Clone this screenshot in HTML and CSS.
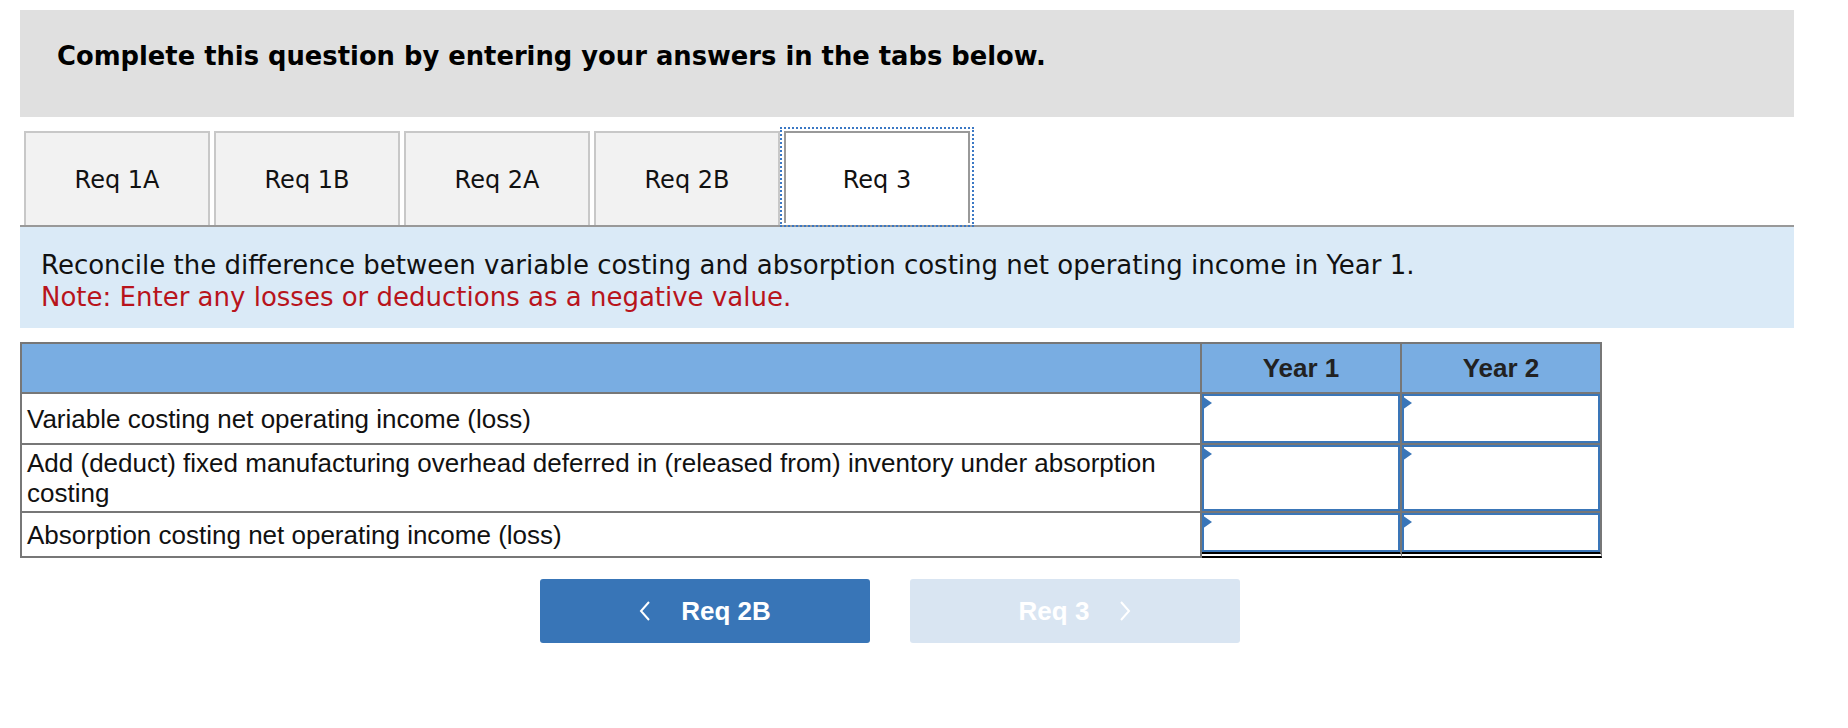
FILE: index.html
```html
<!DOCTYPE html>
<html>
<head>
<meta charset="utf-8">
<link rel="stylesheet" href="styles.css">
</head>
<body>
<div class="page">
  <div class="instructions">Complete this question by entering your answers in the tabs below.</div>
  <div class="tabs">
    <div class="tab">Req 1A</div>
    <div class="tab">Req 1B</div>
    <div class="tab">Req 2A</div>
    <div class="tab">Req 2B</div>
    <div class="tab active">Req 3</div>
  </div>
  <div class="band">
    <div class="prompt">Reconcile the difference between variable costing and absorption costing net operating income in Year 1.</div>
    <div class="note">Note: Enter any losses or deductions as a negative value.</div>
  </div>
  <table class="grid">
    <tr class="head">
      <th class="label-col"><div class="h48"></div></th>
      <th class="val-col">Year 1</th>
      <th class="val-col">Year 2</th>
    </tr>
    <tr>
      <td class="label">Variable costing net operating income (loss)</td>
      <td class="val"><div class="input r1"></div></td>
      <td class="val"><div class="input r1"></div></td>
    </tr>
    <tr>
      <td class="label">Add (deduct) fixed manufacturing overhead deferred in (released from) inventory under absorption costing</td>
      <td class="val"><div class="input r2"></div></td>
      <td class="val"><div class="input r2"></div></td>
    </tr>
    <tr>
      <td class="label last">Absorption costing net operating income (loss)</td>
      <td class="val total"><div class="input r3"></div></td>
      <td class="val total"><div class="input r3"></div></td>
    </tr>
  </table>
  <div class="nav">
    <div class="btn prev">
      <svg width="12" height="20" viewBox="0 0 12 20"><path d="M10 1 L2 10 L10 19" fill="none" stroke="#fff" stroke-width="2"/></svg>
      <span>Req 2B</span>
    </div>
    <div class="btn next">
      <span>Req 3</span>
      <svg width="12" height="20" viewBox="0 0 12 20"><path d="M2 1 L10 10 L2 19" fill="none" stroke="#fff" stroke-width="2"/></svg>
    </div>
  </div>
</div>
</body>
</html>
```

FILE: styles.css
```css
html, body {
  margin: 0;
  padding: 0;
  background: #fff;
}
.page {
  padding: 10px 0 0 20px;
  width: 1774px;
}
.instructions {
  background: #e0e0e0;
  height: 107px;
  box-sizing: border-box;
  padding: 31px 0 0 37px;
  font-family: "DejaVu Sans", Verdana, sans-serif;
  font-weight: bold;
  font-size: 25.8px;
  line-height: 30px;
  color: #000;
}
.tabs {
  margin-top: 14px;
  display: flex;
  gap: 4px;
  padding-left: 4px;
  border-bottom: 2px solid #999;
  align-items: flex-start;
  height: 94px;
}
.tab {
  width: 186px;
  height: 94px;
  box-sizing: border-box;
  border: 2px solid #c8c8c8;
  border-bottom: none;
  background: #f2f2f2;
  display: flex;
  align-items: center;
  justify-content: center;
  font-family: "DejaVu Sans", Verdana, sans-serif;
  font-size: 24px;
  color: #111;
  padding-top: 2px;
}
.tab.active {
  background: #fff;
  border-color: #999;
  height: 92px;
  padding-top: 4px;
  outline: 2px dotted #3b78c4;
  outline-offset: 2px;
  position: relative;
  z-index: 1;
}
.band {
  background: #daeaf7;
  height: 101px;
  box-sizing: border-box;
  padding: 22px 0 0 21px;
  font-family: "DejaVu Sans", Verdana, sans-serif;
  font-size: 26px;
  line-height: 32px;
  color: #111;
}
.note {
  color: #b8141c;
}
.grid {
  margin-top: 14px;
  width: 1582px;
  border-collapse: separate;
  border-spacing: 0;
  border-top: 2px solid #777;
  border-left: 2px solid #777;
  font-family: "Liberation Sans", Arial, sans-serif;
  font-size: 26px;
  table-layout: fixed;
}
.grid th, .grid td {
  border-right: 2px solid #777;
  border-bottom: 2px solid #777;
  padding: 0;
}
.grid th {
  background: #79ade2;
  color: #222;
  font-weight: bold;
  height: 48px;
  text-align: center;
  vertical-align: middle;
}
.h48 {
  height: 48px;
}
.val-col {
  width: 198px;
}
.label-col {
  width: auto;
}
.grid td.label {
  padding: 0 8px 0 5px;
  color: #111;
  line-height: 30px;
  vertical-align: middle;
}
.grid td.val {
  vertical-align: top;
}
.grid td.total {
  border-bottom: 6px double #000;
}
.input {
  position: relative;
  box-sizing: border-box;
  border: 2px solid #3a76b8;
  background: #fff;
}
.input::before {
  content: "";
  position: absolute;
  left: -2px;
  top: 0;
  width: 0;
  height: 0;
  border-left: 10px solid #3a76b8;
  border-top: 7px solid transparent;
  border-bottom: 7px solid transparent;
}
.r1 { height: 49px; }
.r2 { height: 66px; }
.r3 { height: 39px; }
.nav {
  display: flex;
  gap: 40px;
  margin-top: 21px;
  padding-left: 520px;
}
.btn {
  width: 330px;
  height: 64px;
  border-radius: 3px;
  display: flex;
  align-items: center;
  justify-content: center;
  gap: 30px;
  font-family: "Liberation Sans", Arial, sans-serif;
  font-weight: bold;
  font-size: 26px;
  color: #fff;
}
.btn.prev {
  background: #3875b7;
}
.btn.next {
  background: #d9e5f2;
}
```
